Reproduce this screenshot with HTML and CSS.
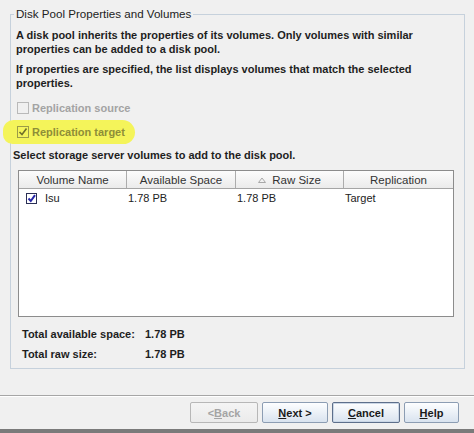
FILE: index.html
```html
<!DOCTYPE html>
<html lang="en">
<head>
    <meta charset="UTF-8">
    <title>Disk Pool Properties and Volumes</title>
    <link rel="stylesheet" href="styles.css">
</head>
<body>
    <div class="dialog">
        <fieldset class="group">
            <legend>Disk Pool Properties and Volumes</legend>
            <p class="note">A disk pool inherits the properties of its volumes. Only volumes with similar<br>properties can be added to a disk pool.</p>
            <p class="note">If properties are specified, the list displays volumes that match the selected<br>properties.</p>
            <div class="check"><span class="box"></span>Replication source</div>
            <div class="check marked"><span class="box"><svg width="10" height="10" viewBox="0 0 10 10"><path d="M1.5 5 L4 7.5 L8.5 1.5" fill="none" stroke="#6f6f2a" stroke-width="1.6"/></svg></span>Replication target</div>
            <div class="pick">Select storage server volumes to add to the disk pool.</div>
            <div class="table">
                <div class="thead">
                    <div>Volume Name</div>
                    <div>Available Space</div>
                    <div><svg class="sort" width="8" height="6" viewBox="0 0 8 6"><polygon points="0.5,5.5 4,1 7.5,5.5" fill="none" stroke="#a8a8a8"/></svg>Raw Size</div>
                    <div>Replication</div>
                </div>
                <div class="trow">
                    <div class="name"><span class="tick"><svg width="9" height="9" viewBox="0 0 9 9"><path d="M1.5 4.5 L3.8 7 L8 1.2" fill="none" stroke="#2626a8" stroke-width="2"/></svg></span>Isu</div>
                    <div>1.78 PB</div>
                    <div>1.78 PB</div>
                    <div>Target</div>
                </div>
            </div>
            <div class="totals">
                <span>Total available space:</span><span>1.78 PB</span>
                <span>Total raw size:</span><span>1.78 PB</span>
            </div>
        </fieldset>
        <div class="buttons">
            <button class="btn off">&lt; <u>B</u>ack</button>
            <button class="btn next"><u>N</u>ext &gt;</button>
            <button class="btn cancel"><u>C</u>ancel</button>
            <button class="btn help"><u>H</u>elp</button>
        </div>
        <div class="strip"></div>
    </div>
</body>
</html>
```

FILE: styles.css
```css
* { margin: 0; padding: 0; box-sizing: border-box; }
body { width: 474px; height: 433px; overflow: hidden; background: #f0f0f0; font-family: "Liberation Sans", Arial, sans-serif; color: #1e1e1e; }
.dialog { width: 474px; height: 433px; }

.group { margin: 7px 0 0 10px; width: 453px; border: 1px solid #c6d1dc; padding: 7px 10px 4px 5px; }
.group legend { margin-left: -2px; padding: 0 2px; font-size: 11.6px; line-height: 14px; color: #222; }
.note { font-size: 11px; font-weight: bold; line-height: 14px; white-space: nowrap; margin-bottom: 6px; }

.check { display: flex; align-items: center; height: 24px; margin-left: 1px; font-size: 11px; font-weight: bold; color: #a3a3a3; }
.check .box { display: flex; align-items: center; justify-content: center; width: 12px; height: 12px; margin-right: 3px; border: 1px solid #b9b9b9; }
.check.marked { width: 132px; margin-left: -13px; padding-left: 14px; border-radius: 11px 13px 12px 10px; background: #f4f45a; color: #8e8e38; }
.check.marked .box { border-color: #9c9c48; }

.pick { margin: 4px 0 0 -3px; font-size: 11px; font-weight: bold; line-height: 14px; white-space: nowrap; }

.table { margin: 8px 0 0 2px; width: 436px; height: 147px; border: 1px solid #8c8c8c; background: #fff; }
.thead, .trow { display: grid; grid-template-columns: 108px 109px 108px 109px; }
.thead { height: 18px; background: linear-gradient(#fcfcfc, #ebebeb); border-bottom: 1px solid #a5a5a5; }
.thead div { display: flex; align-items: center; justify-content: center; border-right: 1px solid #acacac; font-size: 11.5px; color: #333; }
.thead div:last-child { border-right: 0; }
.thead .sort { margin-right: 6px; }
.trow { height: 19px; font-size: 11px; line-height: 19px; color: #222; }
.trow div { padding-left: 1px; }
.trow .name { display: flex; align-items: center; padding-left: 7px; }
.tick { display: flex; align-items: center; justify-content: center; width: 11px; height: 11px; margin-right: 8px; border: 1px solid #2a2f55; background: #fff; }

.totals { display: grid; grid-template-columns: 123px auto; margin: 7px 0 0 6px; font-size: 11px; font-weight: bold; line-height: 20px; }

.buttons { display: flex; justify-content: flex-end; gap: 4px; margin-top: 26px; padding: 6px 15px 6px 0; border-top: 1px solid #a6a6a6; box-shadow: inset 0 1px #fff; }
.btn { display: flex; align-items: center; justify-content: center; height: 21px; border: 1px solid #8c9db3; border-radius: 2px; background: linear-gradient(#fdfeff, #d9e3ef); font: bold 11px "Liberation Sans", Arial, sans-serif; color: #1a1a1a; }
.btn.off { width: 68px; border-color: #b7b7b7; background: linear-gradient(#f4f4f4, #ebebeb); color: #a4a4a4; }
.btn.next { width: 66px; }
.btn.cancel { width: 68px; border-color: #5d6f8b; box-shadow: inset 0 0 0 1px #cbd7e6; }
.btn.help { width: 55px; }

.strip { height: 4px; background: #7a7a7a; }
```
